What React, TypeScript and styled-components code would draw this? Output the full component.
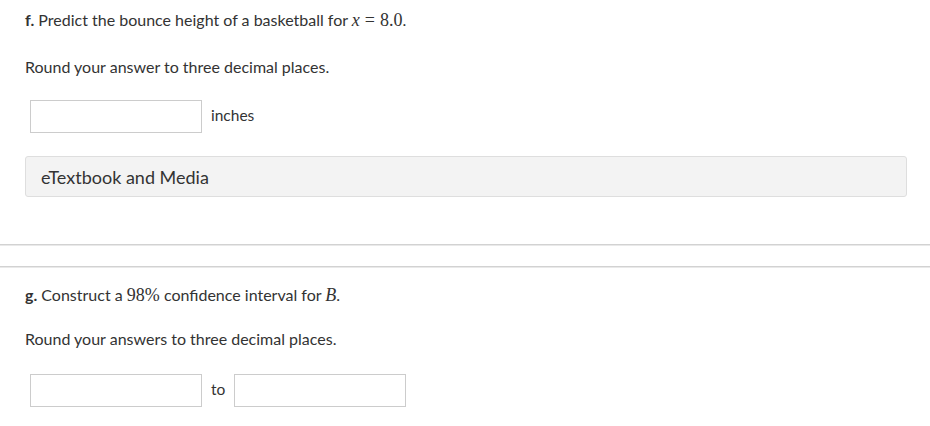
import React from 'react';
import styled, { createGlobalStyle } from 'styled-components';

const GlobalStyle = createGlobalStyle`
    html, body {
        margin: 0;
        padding: 0;
        background: #fff;
    }
    body {
        font-family: Lato, 'Liberation Sans', sans-serif;
        font-size: 16px;
        color: #333;
    }
`;

const Page = styled.div`
    width: 930px;
    padding-top: 9px;
`;

const Section = styled.div`
    padding: 0 23px 0 25px;
`;

const Prompt = styled.div<{ top?: number }>`
    line-height: 21px;
    margin-top: ${props => props.top ?? 0}px;
    b {
        font-weight: 700;
    }
`;

const Instruction = styled.div<{ top: number }>`
    line-height: 21px;
    margin-top: ${props => props.top}px;
`;

const Math = styled.span`
    font-family: 'Liberation Serif', 'DejaVu Serif', serif;
    font-size: 18px;
    i {
        font-style: italic;
    }
`;

const Rel = styled.span`
    margin: 0 5px;
`;

const AnswerRow = styled.div<{ top: number }>`
    display: flex;
    align-items: center;
    gap: 9px;
    margin: ${props => props.top}px 0 0 5px;
`;

const Input = styled.input`
    box-sizing: border-box;
    width: 172px;
    height: 33px;
    border: 1px solid #ccc;
    border-radius: 0;
    background: #fff;
    padding: 0 6px;
    font-family: inherit;
    font-size: 15px;
    outline: none;
`;

const Unit = styled.span`
    color: #333;
    font-size: 15.5px;
    margin-bottom: 3px;
`;

const MediaBox = styled.div`
    box-sizing: border-box;
    height: 41px;
    margin-top: 23px;
    display: flex;
    align-items: center;
    padding-left: 15px;
    background: #f3f3f3;
    border: 1px solid #dedede;
    border-radius: 3px;
    font-size: 18px;
    color: #333;
`;

const Divider = styled.div<{ top: number }>`
    margin-top: ${props => props.top}px;
    border-top: 1px solid #d2d2d2;
    border-bottom: 1px solid #e9e9e9;
`;

export default function App() {
    return (
        <>
            <GlobalStyle />
            <Page>
                <Section>
                    <Prompt>
                        <b>f.</b> Predict the bounce height of a basketball for{' '}
                        <Math><i>x</i><Rel>=</Rel>8.0</Math>.
                    </Prompt>
                    <Instruction top={25}>Round your answer to three decimal places.</Instruction>
                    <AnswerRow top={23}>
                        <Input type="text" />
                        <Unit>inches</Unit>
                    </AnswerRow>
                    <MediaBox>eTextbook and Media</MediaBox>
                </Section>
                <Divider top={47} />
                <Divider top={20} />
                <Section>
                    <Prompt top={16}>
                        <b>g.</b> Construct a <Math>98%</Math> confidence interval for <Math><i>B</i></Math>.
                    </Prompt>
                    <Instruction top={22}>Round your answers to three decimal places.</Instruction>
                    <AnswerRow top={25}>
                        <Input type="text" />
                        <Unit>to</Unit>
                        <Input type="text" />
                    </AnswerRow>
                </Section>
            </Page>
        </>
    );
}
